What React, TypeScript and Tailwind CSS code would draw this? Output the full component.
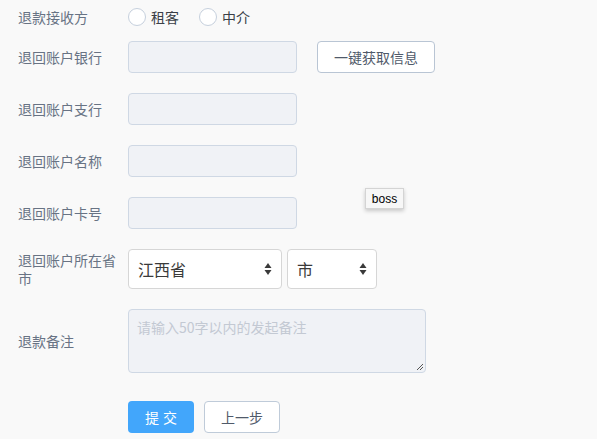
import React from "react";

const font = { fontFamily: '"Noto Sans CJK SC", "Noto Sans", sans-serif' };

function Arrows() {
  return (
    <svg width="8" height="14" viewBox="0 0 8 14" className="absolute right-[9px] top-1/2 -translate-y-1/2">
      <path d="M4 1 L7.5 6 L0.5 6 Z" fill="#3a3a3a" />
      <path d="M4 13 L7.5 8 L0.5 8 Z" fill="#3a3a3a" />
    </svg>
  );
}

function Label({ children }: { children: React.ReactNode }) {
  return (
    <div className="w-[110px] pr-[10px] shrink-0 text-[14px] leading-[18px] text-[#687384]">{children}</div>
  );
}

function InputRow({ label, extra }: { label: string; extra?: React.ReactNode }) {
  return (
    <div className="flex items-center mb-[20px]">
      <Label>{label}</Label>
      <div className="w-[169px] h-[32px] rounded-[4px] border border-[#cfd8e4] bg-[#f0f2f6]" />
      {extra}
    </div>
  );
}

function Radio({ label }: { label: string }) {
  return (
    <div className="flex items-center mr-[20px]">
      <div className="w-[18px] h-[18px] rounded-full border border-[#c6d0dd] bg-white" />
      <span className="ml-[5px] text-[14px] text-[#3a3f47]">{label}</span>
    </div>
  );
}

export default function App() {
  return (
    <div className="relative w-[597px] h-[439px] bg-[#f9f9f9] pl-[18px] pt-[7px] overflow-hidden" style={font}>
      <div className="flex items-center h-[20px] mb-[14px]">
        <Label>退款接收方</Label>
        <Radio label="租客" />
        <Radio label="中介" />
      </div>
      <InputRow
        label="退回账户银行"
        extra={
          <button className="ml-[20px] w-[118px] h-[32px] rounded-[4px] border border-[#b9c5d4] bg-white text-[14px] text-[#505a6a]">
            一键获取信息
          </button>
        }
      />
      <InputRow label="退回账户支行" />
      <InputRow label="退回账户名称" />
      <InputRow label="退回账户卡号" />
      <div className="flex items-center mb-[20px]">
        <Label>退回账户所在省市</Label>
        <div className="relative w-[154px] h-[40px] rounded-[4px] border border-[#d6d6d6] bg-white flex items-center pl-[9px] text-[16px] text-[#3a3a3a]">
          江西省
          <Arrows />
        </div>
        <div className="relative ml-[5px] w-[90px] h-[40px] rounded-[4px] border border-[#d6d6d6] bg-white flex items-center pl-[9px] text-[16px] text-[#3a3a3a]">
          市
          <Arrows />
        </div>
      </div>
      <div className="flex items-center">
        <Label>退款备注</Label>
        <div className="relative w-[298px] h-[64px] rounded-[4px] border border-[#cfd8e4] bg-[#f0f2f6] px-[8px] pt-[6px] text-[14px] leading-[22px] text-[#c3c9d3]">
          请输入50字以内的发起备注
          <svg width="8" height="8" viewBox="0 0 8 8" className="absolute right-[1px] bottom-[1px]">
            <path d="M7 1 L1 7 M7 4 L4 7" stroke="#555" strokeWidth="1" />
          </svg>
        </div>
      </div>
      <div className="flex items-center mt-[28px] pl-[110px]">
        <button className="w-[66px] h-[32px] rounded-[4px] bg-[#42a6fb] text-white text-[14px] tracking-[4px] pl-[4px]">
          提交
        </button>
        <button className="ml-[10px] w-[76px] h-[32px] rounded-[4px] border border-[#bfcbd9] bg-white text-[14px] text-[#505a6a]">
          上一步
        </button>
      </div>
      <div className="absolute left-[365px] top-[188px] w-[39px] h-[21px] bg-[#f7f7f7] border border-[#d4d4d4] shadow-[0_2px_4px_rgba(0,0,0,0.2)] flex items-center justify-center text-[12px] text-black" style={{ fontFamily: '"Liberation Sans", Arial, sans-serif' }}>
        boss
      </div>
    </div>
  );
}
